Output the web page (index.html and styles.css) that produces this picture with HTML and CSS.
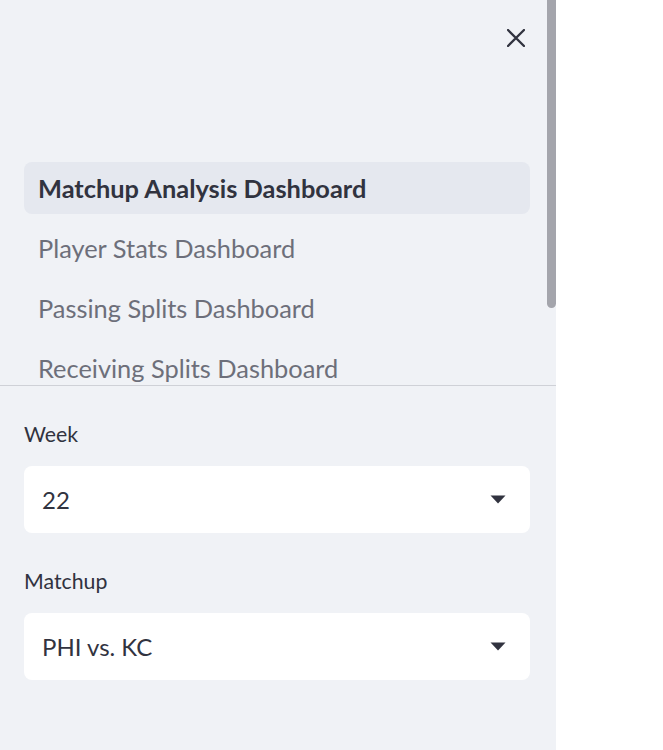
FILE: index.html
```html
<!DOCTYPE html>
<html lang="en">
<head>
<meta charset="utf-8">
<title>Matchup Analysis Dashboard</title>
<link rel="stylesheet" href="styles.css">
</head>
<body>
<div class="app">
  <aside class="sidebar">
    <div class="sb-header">
      <button class="close" aria-label="Close sidebar">
        <svg width="18" height="18" viewBox="0 0 18 18"><path d="M1 1L17 17M17 1L1 17" stroke="#31333f" stroke-width="2.3" stroke-linecap="round" fill="none"/></svg>
      </button>
    </div>
    <nav class="nav">
      <ul>
        <li class="nav-item active">Matchup Analysis Dashboard</li>
        <li class="nav-item">Player Stats Dashboard</li>
        <li class="nav-item">Passing Splits Dashboard</li>
        <li class="nav-item">Receiving Splits Dashboard</li>
      </ul>
    </nav>
    <div class="sb-content">
      <div class="field">
        <label class="field-label">Week</label>
        <div class="select">
          <span class="select-value">22</span>
          <svg class="caret" width="16" height="9" viewBox="0 0 16 9"><path d="M0.5 0.5H15.5L8 8.5Z" fill="#31333f"/></svg>
        </div>
      </div>
      <div class="field">
        <label class="field-label">Matchup</label>
        <div class="select">
          <span class="select-value">PHI vs. KC</span>
          <svg class="caret" width="16" height="9" viewBox="0 0 16 9"><path d="M0.5 0.5H15.5L8 8.5Z" fill="#31333f"/></svg>
        </div>
      </div>
    </div>
    <div class="scrollbar"></div>
  </aside>
  <main class="main"></main>
</div>
</body>
</html>
```

FILE: styles.css
```css
* { box-sizing: border-box; }
html, body { margin: 0; padding: 0; }
body {
  font-family: Lato, "Source Sans Pro", "Noto Sans", sans-serif;
  color: #31333f;
  background: #ffffff;
}
.app {
  display: flex;
  width: 663px;
  height: 750px;
  overflow: hidden;
}
.sidebar {
  position: relative;
  width: 556px;
  flex: 0 0 556px;
  height: 750px;
  background: #f0f2f6;
  overflow: hidden;
}
.main { flex: 1; background: #fff; }

.sb-header {
  height: 130px;
  display: flex;
  justify-content: flex-end;
  align-items: flex-start;
  padding: 20px 22px 0 0;
}
.close {
  width: 36px;
  height: 36px;
  border: 0;
  background: transparent;
  padding: 0;
  display: flex;
  align-items: center;
  justify-content: center;
  cursor: pointer;
}

.nav {
  height: 256px;
  padding-top: 32px;
  border-bottom: 1px solid #cfd1d7;
  overflow: hidden;
}
.nav ul {
  list-style: none;
  margin: 0;
  padding: 0 26px 0 24px;
  display: flex;
  flex-direction: column;
  gap: 8px;
}
.nav-item {
  height: 52px;
  display: flex;
  align-items: center;
  padding-left: 14px;
  padding-bottom: 1px;
  border-radius: 8px;
  font-size: 25.4px;
  color: #6d6f7a;
  white-space: nowrap;
}
.nav-item.active {
  background: #e5e8ef;
  color: #31333f;
  font-weight: 700;
}

.sb-content {
  padding: 33px 26px 0 24px;
  display: flex;
  flex-direction: column;
  gap: 33px;
}
.field {
  display: flex;
  flex-direction: column;
  gap: 17px;
}
.field-label {
  font-size: 21.3px;
  line-height: 30px;
  color: #31333f;
}
.select {
  height: 67px;
  background: #ffffff;
  border-radius: 8px;
  display: flex;
  align-items: center;
  justify-content: space-between;
  padding: 0 24px 0 18px;
}
.select-value {
  font-size: 24px;
  color: #31333f;
}
.caret { display: block; }

.scrollbar {
  position: absolute;
  top: -4px;
  right: 0;
  width: 9px;
  height: 312px;
  border-radius: 5px;
  background: #a4a5ac;
}
```
